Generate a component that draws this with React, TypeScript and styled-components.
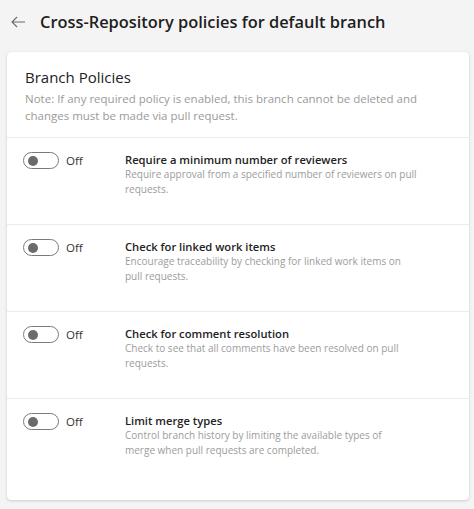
import React from 'react';
import styled, { createGlobalStyle } from 'styled-components';

const GlobalStyle = createGlobalStyle`
  html, body {
    margin: 0;
    padding: 0;
    background: #f4f4f4;
    font-family: 'Open Sans', 'Noto Sans', sans-serif;
  }
`;

const Page = styled.div`
  width: 474px;
  height: 509px;
  box-sizing: border-box;
  padding: 0 5px 0 7px;
  display: flex;
  flex-direction: column;
`;

const Header = styled.div`
  height: 52px;
  display: flex;
  align-items: center;
  gap: 15px;
  padding: 0 0 9px 4px;
  box-sizing: border-box;
`;

const BackButton = styled.button`
  border: none;
  background: none;
  padding: 0;
  display: flex;
  color: #6a6a6a;
  cursor: pointer;
`;

const Title = styled.h1`
  margin: 0;
  font-size: 16.4px;
  font-weight: 600;
  color: #1e1e1e;
`;

const Card = styled.div`
  background: #fff;
  border-radius: 4px;
  box-shadow: 0 1px 3px rgba(0, 0, 0, 0.16), 0 0 1px rgba(0, 0, 0, 0.1);
  height: 448px;
  display: flex;
  flex-direction: column;
`;

const CardHeader = styled.div`
  padding: 15px 18px 13px;
  border-bottom: 1px solid #ebebeb;
`;

const SectionTitle = styled.h2`
  margin: 0 0 3px;
  font-size: 15px;
  line-height: 20px;
  font-weight: 400;
  color: #222;
`;

const Note = styled.p`
  margin: 0;
  font-size: 11.5px;
  line-height: 17px;
  color: #9a9a9a;
`;

const Row = styled.div<{ last?: boolean }>`
  height: 87px;
  box-sizing: border-box;
  padding: 14px 18px 0 16px;
  display: flex;
  align-items: flex-start;
  border-bottom: ${(p) => (p.last ? 'none' : '1px solid #ebebeb')};
`;

const ToggleArea = styled.div`
  width: 102px;
  flex-shrink: 0;
  display: flex;
  align-items: center;
  gap: 7px;
`;

const Toggle = styled.div`
  width: 36px;
  height: 17px;
  border: 1px solid #7a7a7a;
  border-radius: 9px;
  display: flex;
  align-items: center;
  padding: 0 0 0 4px;
  box-sizing: border-box;
`;

const Knob = styled.span`
  width: 10px;
  height: 10px;
  border-radius: 50%;
  background: #6b6b6b;
`;

const OffLabel = styled.span`
  font-size: 11.5px;
  color: #333;
`;

const Info = styled.div`
  flex: 1;
  padding-top: 1px;
`;

const PolicyTitle = styled.div`
  font-size: 11.2px;
  font-weight: 600;
  color: #222;
  line-height: 14px;
`;

const PolicyDesc = styled.div`
  font-size: 10px;
  line-height: 15px;
  color: #9c9c9c;
  max-width: 292px;
`;

const policies = [
  {
    title: 'Require a minimum number of reviewers',
    desc: 'Require approval from a specified number of reviewers on pull requests.',
  },
  {
    title: 'Check for linked work items',
    desc: 'Encourage traceability by checking for linked work items on pull requests.',
  },
  {
    title: 'Check for comment resolution',
    desc: 'Check to see that all comments have been resolved on pull requests.',
  },
  {
    title: 'Limit merge types',
    desc: 'Control branch history by limiting the available types of merge\u00a0when pull requests are completed.',
  },
];

const App: React.FC = () => {
  return (
    <>
      <GlobalStyle />
      <Page>
        <Header>
          <BackButton aria-label="Back">
            <svg width="14" height="12" viewBox="0 0 14 12" fill="none">
              <path d="M14 6H1M6 1L1 6l5 5" stroke="currentColor" strokeWidth="1.1" />
            </svg>
          </BackButton>
          <Title>Cross-Repository policies for default branch</Title>
        </Header>
        <Card>
          <CardHeader>
            <SectionTitle>Branch Policies</SectionTitle>
            <Note>
              Note: If any required policy is enabled, this branch cannot be deleted and changes
              must be made via pull request.
            </Note>
          </CardHeader>
          {policies.map((p, i) => (
            <Row key={p.title} last={i === policies.length - 1}>
              <ToggleArea>
                <Toggle>
                  <Knob />
                </Toggle>
                <OffLabel>Off</OffLabel>
              </ToggleArea>
              <Info>
                <PolicyTitle>{p.title}</PolicyTitle>
                <PolicyDesc>{p.desc}</PolicyDesc>
              </Info>
            </Row>
          ))}
        </Card>
      </Page>
    </>
  );
};

export default App;
